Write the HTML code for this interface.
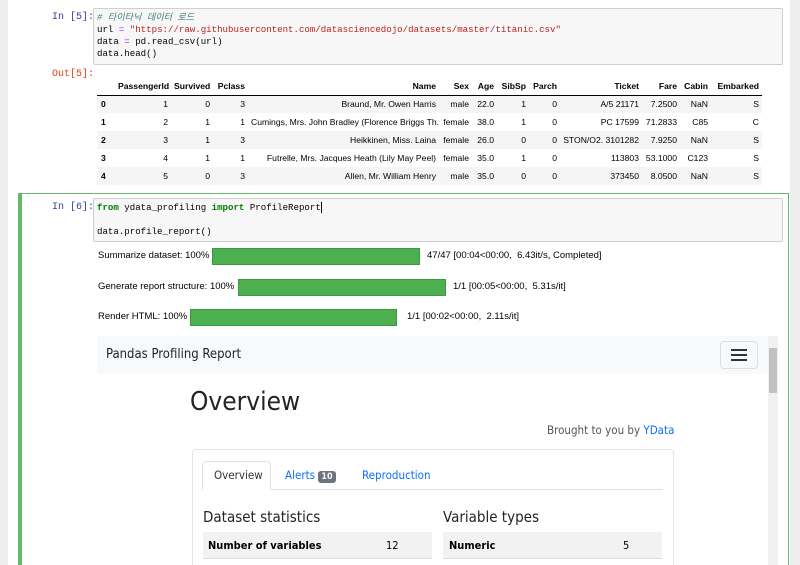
<!DOCTYPE html>
<html><head><meta charset="utf-8"><style>
*{margin:0;padding:0;box-sizing:border-box}
html,body{width:800px;height:565px;overflow:hidden}
body{background:#eee;position:relative;font-family:"Liberation Sans","Noto Sans CJK KR",sans-serif}
.nb{position:absolute;left:8px;top:0;width:782px;height:565px;background:#fff}
.a{position:absolute;white-space:nowrap}
.code{font-family:"Liberation Mono","Noto Sans CJK KR",monospace;font-size:9.1px;line-height:12px;color:#000}
.prompt{font-family:"Liberation Mono",monospace;font-size:10px}
.box{position:absolute;background:#f7f7f7;border:1px solid #cfcfcf;border-radius:2px}
table{position:absolute;border-collapse:collapse;font-size:8.6px;left:97px;top:77px;width:665px;table-layout:fixed}
td,th{text-align:right;height:18px;padding:0 3px;white-space:nowrap;overflow:hidden}
th{font-weight:bold}
thead tr{border-bottom:1px solid #000;height:18px}
tbody tr:nth-child(odd){background:#f5f5f5}
tbody th{text-align:left;padding-left:4px}
.bar{position:absolute;height:17px;background:#4caf50;border:1px solid #3b9a3f}
.pt{font-size:9.5px;color:#000}
.sn{font-family:"DejaVu Sans Condensed","DejaVu Sans",sans-serif}
</style></head><body>
<div class="nb"></div>
<div class="a prompt" style="left:52px;top:12px;color:#303f9f">In [5]:</div>
<div class="box" style="left:93px;top:8px;width:690px;height:57px"></div>
<div class="a code" style="left:97px;top:12px"><span style="color:#408080;font-style:italic"># 타이타닉 데이터 로드</span><br>url <span style="color:#aa22ff">=</span> <span style="color:#ba2121">"https://raw.githubusercontent.com/datasciencedojo/datasets/master/titanic.csv"</span><br>data <span style="color:#aa22ff">=</span> pd.read_csv(url)<br>data.head()</div>
<div class="a prompt" style="left:52px;top:69px;color:#d84315">Out[5]:</div>
<table>
<colgroup><col style="width:18px"><col style="width:56px"><col style="width:42px"><col style="width:35px"><col style="width:191px"><col style="width:33px"><col style="width:25px"><col style="width:32px"><col style="width:31px"><col style="width:82px"><col style="width:38px"><col style="width:31px"><col style="width:51px"></colgroup>
<thead><tr><th></th><th>PassengerId</th><th>Survived</th><th>Pclass</th><th>Name</th><th>Sex</th><th>Age</th><th>SibSp</th><th>Parch</th><th>Ticket</th><th>Fare</th><th>Cabin</th><th>Embarked</th></tr></thead>
<tbody>
<tr><th>0</th><td>1</td><td>0</td><td>3</td><td>Braund, Mr. Owen Harris</td><td>male</td><td>22.0</td><td>1</td><td>0</td><td>A/5 21171</td><td>7.2500</td><td>NaN</td><td>S</td></tr>
<tr><th>1</th><td>2</td><td>1</td><td>1</td><td>Cumings, Mrs. John Bradley (Florence Briggs Th...</td><td>female</td><td>38.0</td><td>1</td><td>0</td><td>PC 17599</td><td>71.2833</td><td>C85</td><td>C</td></tr>
<tr><th>2</th><td>3</td><td>1</td><td>3</td><td>Heikkinen, Miss. Laina</td><td>female</td><td>26.0</td><td>0</td><td>0</td><td>STON/O2. 3101282</td><td>7.9250</td><td>NaN</td><td>S</td></tr>
<tr><th>3</th><td>4</td><td>1</td><td>1</td><td>Futrelle, Mrs. Jacques Heath (Lily May Peel)</td><td>female</td><td>35.0</td><td>1</td><td>0</td><td>113803</td><td>53.1000</td><td>C123</td><td>S</td></tr>
<tr><th>4</th><td>5</td><td>0</td><td>3</td><td>Allen, Mr. William Henry</td><td>male</td><td>35.0</td><td>0</td><td>0</td><td>373450</td><td>8.0500</td><td>NaN</td><td>S</td></tr>
</tbody></table>
<div class="a" style="left:18px;top:193px;width:771px;height:380px;border:1px solid #66bb6a;border-left:4px solid #66bb6a"></div>
<div class="a prompt" style="left:52px;top:202px;color:#303f9f">In [6]:</div>
<div class="box" style="left:93px;top:198px;width:690px;height:44px"></div>
<div class="a code" style="left:97px;top:202px"><span style="color:#008000;font-weight:bold">from</span> ydata_profiling <span style="color:#008000;font-weight:bold">import</span> ProfileReport<span style="border-left:1px solid #000"></span><br><br>data.profile_report()</div>
<div class="a pt" style="left:98px;top:250px">Summarize dataset: 100%</div><div class="bar" style="left:212px;top:248px;width:208px"></div><div class="a pt" style="left:427px;top:250px">47/47 [00:04&lt;00:00,&nbsp; 6.43it/s, Completed]</div>
<div class="a pt" style="left:98px;top:281px">Generate report structure: 100%</div><div class="bar" style="left:238px;top:279px;width:208px"></div><div class="a pt" style="left:453px;top:281px">1/1 [00:05&lt;00:00,&nbsp; 5.31s/it]</div>
<div class="a pt" style="left:98px;top:311px">Render HTML: 100%</div><div class="bar" style="left:190px;top:309px;width:207px"></div><div class="a pt" style="left:407px;top:311px">1/1 [00:02&lt;00:00,&nbsp; 2.11s/it]</div>
<div class="a" style="left:97px;top:336px;width:671px;height:229px;background:#fff"></div>
<div class="a" style="left:97px;top:336px;width:671px;height:38px;background:#f8f9fa"></div>
<div class="a sn" style="left:106px;top:347px;font-size:13px;color:#212529">Pandas Profiling Report</div>
<div class="a" style="left:720px;top:341px;width:38px;height:28px;border:1px solid #ddd;border-radius:4px"></div>
<div class="a" style="left:731px;top:349px;width:16px;height:2px;background:#333;box-shadow:0 5px 0 #333,0 10px 0 #333"></div>
<div class="a" style="left:768px;top:336px;width:10px;height:229px;background:#f1f1f1"></div>
<div class="a" style="left:769px;top:348px;width:8px;height:45px;background:#c1c1c1"></div>
<div class="a sn" style="left:190px;top:387px;font-size:26px;font-weight:300;color:#212529">Overview</div>
<div class="a sn" style="left:547px;top:423px;font-size:11.5px;color:#555">Brought to you by <span style="color:#0d6efd">YData</span></div>
<div class="a" style="left:192px;top:449px;width:482px;height:130px;border:1px solid #e5e5e5;border-radius:4px"></div>
<div class="a" style="left:202px;top:489px;width:461px;height:1px;background:#dee2e6"></div>
<div class="a" style="left:202px;top:461px;width:69px;height:29px;border:1px solid #dee2e6;border-bottom:1px solid #fff;border-radius:4px 4px 0 0;background:#fff"></div>
<div class="a sn" style="left:214px;top:468px;font-size:11.5px;color:#333">Overview</div>
<div class="a sn" style="left:285px;top:468px;font-size:11.5px;color:#0d6efd">Alerts <span style="display:inline-block;background:#6c757d;color:#fff;font-size:9px;font-weight:bold;border-radius:3px;padding:1px 3px">10</span></div>
<div class="a sn" style="left:362px;top:468px;font-size:11.5px;color:#0d6efd">Reproduction</div>
<div class="a sn" style="left:203px;top:508px;font-size:15px;color:#212529">Dataset statistics</div>
<div class="a sn" style="left:443px;top:508px;font-size:15px;color:#212529">Variable types</div>
<div class="a" style="left:203px;top:532px;width:229px;height:27px;background:#f2f2f2;border-bottom:1px solid #ddd"></div>
<div class="a" style="left:443px;top:532px;width:219px;height:27px;background:#f2f2f2;border-bottom:1px solid #ddd"></div>
<div class="a sn" style="left:208px;top:539px;font-size:11px;font-weight:bold">Number of variables</div>
<div class="a sn" style="left:386px;top:539px;font-size:11px">12</div>
<div class="a sn" style="left:449px;top:539px;font-size:11px;font-weight:bold">Numeric</div>
<div class="a sn" style="left:623px;top:539px;font-size:11px">5</div>
</body></html>
